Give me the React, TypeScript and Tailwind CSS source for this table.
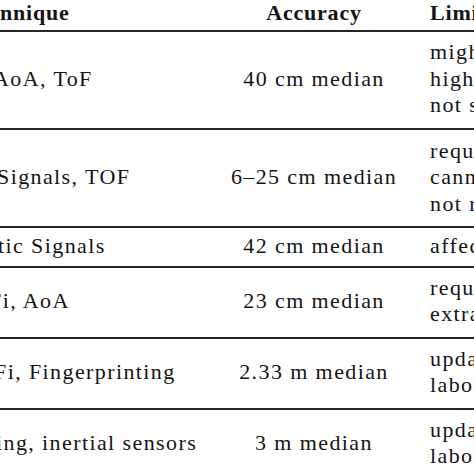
// Table crop: localisation techniques with accuracy and limitations.

interface Row {
  tech: string
  shift: string
  accuracy: string
  limits: string[]
  pad: string
}

const ROWS: Row[] = [
  {
    tech: 'AoA, ToF',
    shift: 'ml-[-7px]',
    accuracy: '40 cm median',
    limits: ['might be affected by multipath', 'high cost of hardware', 'not scalable'],
    pad: 'pt-[7px] pb-[9px]',
  },
  {
    tech: 'Signals, TOF',
    shift: 'ml-[-3px]',
    accuracy: '6–25 cm median',
    limits: ['requires extra hardware', 'cannot work through walls', 'not robust to noise'],
    pad: 'pt-[8px] pb-[9px]',
  },
  {
    tech: 'tic Signals',
    shift: 'ml-[-2px]',
    accuracy: '42 cm median',
    limits: ['affected by noise'],
    pad: 'pt-[5px] pb-[6px]',
  },
  {
    tech: 'Fi, AoA',
    shift: 'ml-[-11px]',
    accuracy: '23 cm median',
    limits: ['requires antenna arrays', 'extra hardware'],
    pad: 'pt-[7px] pb-[9px]',
  },
  {
    tech: 'Fi, Fingerprinting',
    shift: 'ml-[-6px]',
    accuracy: '2.33 m median',
    limits: ['updating fingerprints is', 'laborious'],
    pad: 'pt-[7px] pb-[9px]',
  },
  {
    tech: 'ing, inertial sensors',
    shift: 'ml-[-4px]',
    accuracy: '3 m median',
    limits: ['updating fingerprints is', 'laborious'],
    pad: 'pt-[7px] pb-[9px]',
  },
]

export default function App() {
  return (
    <div className="w-[474px] h-[474px] overflow-hidden bg-white text-[#141414] font-['Liberation_Serif',serif] text-[22px] leading-[26.5px]">
      {/* Header */}
      <div className="grid grid-cols-[216px_196px_1fr] h-[32px] items-end pb-[5px] border-b-2 border-[#262626] font-bold tracking-[0.8px] whitespace-nowrap">
        <div>nnique</div>
        <div className="text-center">Accuracy</div>
        <div className="pl-[18px]">Limitations</div>
      </div>

      {/* Body */}
      {ROWS.map((r) => (
        <div
          key={r.accuracy}
          className={`grid grid-cols-[216px_196px_1fr] items-center border-b-2 border-[#262626] tracking-[1.4px] whitespace-nowrap ${r.pad}`}
        >
          <div className={r.shift}>{r.tech}</div>
          <div className="text-center">{r.accuracy}</div>
          <div className="pl-[18px]">
            {r.limits.map((l) => (
              <div key={l}>{l}</div>
            ))}
          </div>
        </div>
      ))}
    </div>
  )
}
